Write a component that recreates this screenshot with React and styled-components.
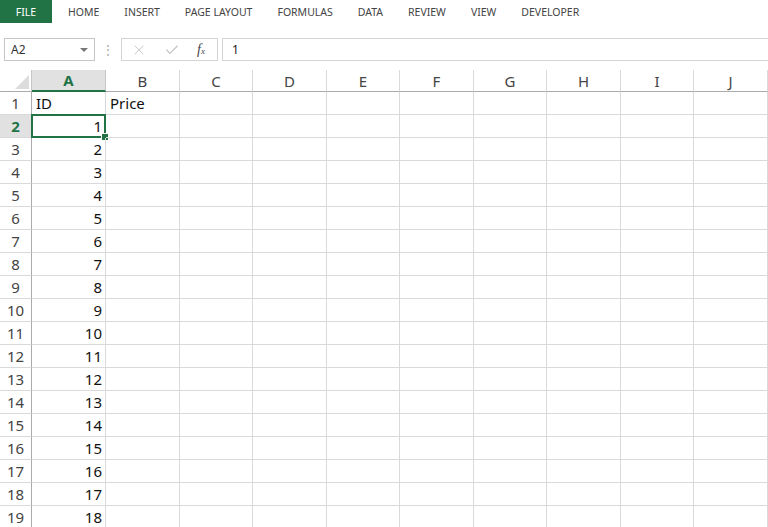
import React from 'react';
import styled, { createGlobalStyle } from 'styled-components';
import { X, Check } from 'lucide-react';

const GlobalStyle = createGlobalStyle`
  html, body {
    margin: 0;
    padding: 0;
    background: #ffffff;
    overflow: hidden;
  }
  body {
    font-family: "Noto Sans", "Open Sans", sans-serif;
    color: #222;
  }
`;

const GREEN = '#217346';
const GRID = '#d9d9d9';

const TABS = ['HOME', 'INSERT', 'PAGE LAYOUT', 'FORMULAS', 'DATA', 'REVIEW', 'VIEW', 'DEVELOPER'];
const COLS = ['A', 'B', 'C', 'D', 'E', 'F', 'G', 'H', 'I', 'J'];
const COL_WIDTHS = [74, 74, 73, 74, 73, 74, 73, 74, 73, 74];

const Page = styled.div`
  width: 768px;
  height: 527px;
  overflow: hidden;
`;

const Ribbon = styled.div`
  display: flex;
  align-items: stretch;
  height: 23px;
`;

const FileTab = styled.div`
  width: 52px;
  margin-right: 16px;
  background: ${GREEN};
  color: #fff;
  font-size: 10.5px;
  display: flex;
  align-items: center;
  justify-content: center;
`;

const TabList = styled.div`
  display: flex;
  gap: 25px;
`;

const Tab = styled.div`
  font-size: 10.5px;
  color: #444;
  display: flex;
  align-items: center;
`;

const FormulaRow = styled.div`
  display: flex;
  align-items: stretch;
  height: 23px;
  margin-top: 15px;
  padding-left: 4px;
`;

const NameBox = styled.div`
  box-sizing: border-box;
  width: 91px;
  border: 1px solid #c6c6c6;
  display: flex;
  align-items: center;
  justify-content: space-between;
  padding: 0 6px 0 6px;
  font-size: 12px;
  color: #333;
`;

const Caret = styled.span`
  width: 0;
  height: 0;
  border-left: 4px solid transparent;
  border-right: 4px solid transparent;
  border-top: 4px solid #777;
`;

const Grip = styled.div`
  width: 26px;
  display: flex;
  align-items: center;
  justify-content: center;
  color: #a8a8a8;
  font-size: 12px;
`;

const ButtonBox = styled.div`
  box-sizing: border-box;
  width: 97px;
  border: 1px solid #d4d4d4;
  display: flex;
  align-items: center;
  gap: 17px;
  padding-left: 9px;
`;

const Fx = styled.span`
  font-family: "Liberation Serif", serif;
  font-style: italic;
  font-size: 14px;
  color: #444;
  sub {
    font-size: 9px;
    vertical-align: 0;
  }
`;

const FormulaInput = styled.div`
  box-sizing: border-box;
  flex: 1;
  margin-left: 4px;
  border: 1px solid #d4d4d4;
  border-right: none;
  display: flex;
  align-items: center;
  padding-left: 9px;
  font-size: 12px;
  color: #222;
`;

const Sheet = styled.div`
  margin-top: 9px;
  display: grid;
  grid-template-columns: 32px ${COL_WIDTHS.map((w) => `${w}px`).join(' ')};
  grid-template-rows: 22px;
  grid-auto-rows: 23px;
`;

const Corner = styled.div`
  position: relative;
  box-sizing: border-box;
  border-right: 1px solid #c6c6c6;
  border-bottom: 1px solid #ababab;
  &::after {
    content: '';
    position: absolute;
    right: 2px;
    bottom: 2px;
    width: 0;
    height: 0;
    border-left: 14px solid transparent;
    border-bottom: 14px solid #dcdcdc;
  }
`;

const ColHead = styled.div`
  box-sizing: border-box;
  display: flex;
  align-items: center;
  justify-content: center;
  font-size: 15px;
  color: ${(p) => (p.active ? GREEN : '#444')};
  font-weight: ${(p) => (p.active ? 700 : 400)};
  background: ${(p) => (p.active ? '#e1e1e1' : '#fff')};
  border-right: 1px solid ${(p) => (p.active ? '#c6c6c6' : GRID)};
  border-bottom: ${(p) => (p.active ? `2px solid ${GREEN}` : '1px solid #ababab')};
`;

const RowHead = styled.div`
  box-sizing: border-box;
  display: flex;
  align-items: center;
  justify-content: center;
  font-size: 15px;
  color: ${(p) => (p.active ? GREEN : '#444')};
  font-weight: ${(p) => (p.active ? 700 : 400)};
  background: ${(p) => (p.active ? '#e1e1e1' : '#fff')};
  border-right: 1px solid #ababab;
  border-bottom: 1px solid ${GRID};
`;

const Cell = styled.div`
  position: relative;
  box-sizing: border-box;
  display: flex;
  align-items: center;
  justify-content: ${(p) => (p.numeric ? 'flex-end' : 'flex-start')};
  padding: 0 3px 0 4px;
  font-size: 15px;
  color: #111;
  white-space: nowrap;
  border-right: 1px solid ${GRID};
  border-bottom: 1px solid ${GRID};
  ${(p) =>
    p.selected &&
    `
    &::before {
      content: '';
      position: absolute;
      left: -1px;
      top: -1px;
      right: -1px;
      bottom: -1px;
      border: 2px solid ${GREEN};
      pointer-events: none;
    }
    &::after {
      content: '';
      position: absolute;
      right: -4px;
      bottom: -4px;
      width: 6px;
      height: 6px;
      background: ${GREEN};
      border: 1px solid #fff;
    }
  `}
`;

const rows = Array.from({ length: 19 }, (_, i) => i + 1);

const cellValue = (row, col) => {
  if (row === 1 && col === 'A') return 'ID';
  if (row === 1 && col === 'B') return 'Price';
  if (row > 1 && col === 'A') return String(row - 1);
  return '';
};

const App = () => {
  return (
    <Page>
      <GlobalStyle />
      <Ribbon>
        <FileTab>FILE</FileTab>
        <TabList>
          {TABS.map((t) => (
            <Tab key={t}>{t}</Tab>
          ))}
        </TabList>
      </Ribbon>
      <FormulaRow>
        <NameBox>
          A2
          <Caret />
        </NameBox>
        <Grip>⋮</Grip>
        <ButtonBox>
          <X size={16} color="#c0c0c0" strokeWidth={1.3} />
          <Check size={16} color="#c0c0c0" strokeWidth={1.6} />
          <Fx>
            f<sub>x</sub>
          </Fx>
        </ButtonBox>
        <FormulaInput>1</FormulaInput>
      </FormulaRow>
      <Sheet>
        <Corner />
        {COLS.map((c) => (
          <ColHead key={c} active={c === 'A'}>
            {c}
          </ColHead>
        ))}
        {rows.map((r) => (
          <React.Fragment key={r}>
            <RowHead active={r === 2}>{r}</RowHead>
            {COLS.map((c) => (
              <Cell
                key={c}
                numeric={r > 1 && c === 'A'}
                selected={r === 2 && c === 'A'}
              >
                {cellValue(r, c)}
              </Cell>
            ))}
          </React.Fragment>
        ))}
      </Sheet>
    </Page>
  );
};

export default App;
